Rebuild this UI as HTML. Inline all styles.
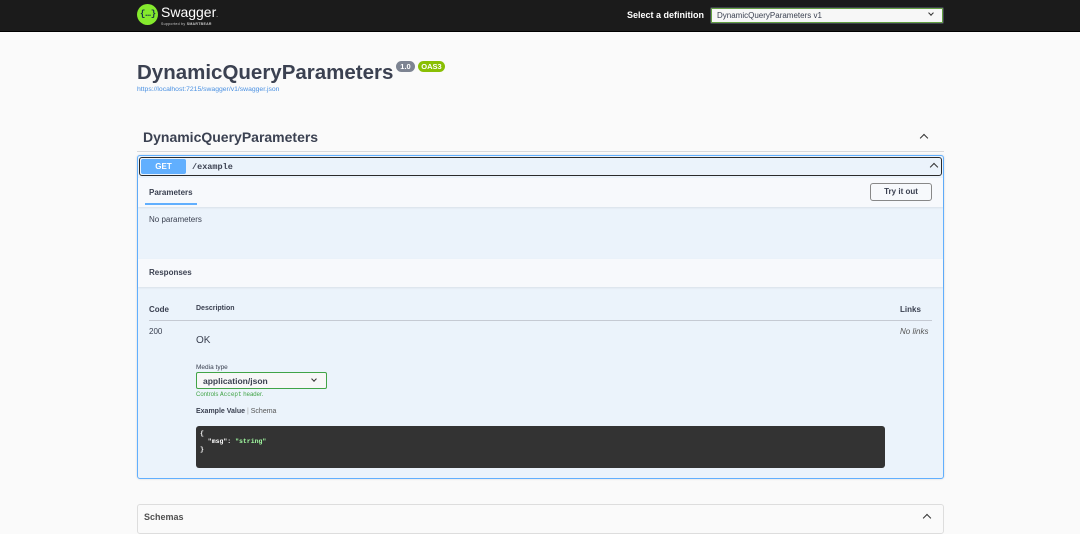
<!DOCTYPE html>
<html><head><meta charset="utf-8"><style>
*{box-sizing:border-box;margin:0;padding:0}
body{width:1080px;height:530px;overflow:hidden;background:#fafafa;font-family:"Liberation Sans",sans-serif;color:#3b4151;position:relative}
.a{position:absolute}
.top{left:0;top:0;width:1080px;height:32px;background:#1b1b1b;border-bottom:1px solid #000}
.mono{font-family:"Liberation Mono",monospace}
.chev{position:absolute;width:7px;height:7px;border-left:1.5px solid #333;border-top:1.5px solid #333;transform:rotate(45deg)}
</style></head><body>
<div class="a top">
  <div class="a" style="left:137px;top:4px;width:21px;height:21px;border-radius:50%;background:#85ea2d"></div>
  <div class="a mono" style="left:140px;top:9px;font-size:9px;color:#173647;font-weight:bold">{…}</div>
  <div class="a" style="left:161px;top:4px;font-size:14px;color:#fff">Swagger<span style="font-size:6px">.</span></div>
  <div class="a" style="left:161px;top:22px;font-size:3.5px;color:#ccc;letter-spacing:0.3px">Supported by <b>SMARTBEAR</b></div>
  <div class="a" style="left:627px;top:10px;font-size:9px;font-weight:bold;color:#fff">Select a definition</div>
  <div class="a" style="left:710px;top:7px;width:234px;height:17px;background:#f7f7f7;border:1px solid #41444e;box-shadow:0 0 0 1px #62a03f inset;border-radius:2px"></div>
  <div class="a" style="left:717px;top:11px;font-size:8px;color:#3b4151">DynamicQueryParameters v1</div>
  <div class="chev" style="left:929px;top:11px;width:4px;height:4px;transform:rotate(225deg)"></div>
</div>
<div class="a" style="left:137px;top:61px;font-size:20.5px;font-weight:bold;color:#3b4151">DynamicQueryParameters</div>
<div class="a" style="left:396px;top:61px;width:19px;height:11px;border-radius:6px;background:#7d8492;color:#fff;font-size:7.5px;font-weight:bold;text-align:center;line-height:11px">1.0</div>
<div class="a" style="left:418px;top:61px;width:27px;height:11px;border-radius:6px;background:#89bf04;color:#fff;font-size:7.5px;font-weight:bold;text-align:center;line-height:11px">OAS3</div>
<div class="a" style="left:137px;top:86px;font-size:6.8px;color:#4990e2">https://localhost:7215/swagger/v1/swagger.json</div>

<div class="a" style="left:143px;top:129px;font-size:14px;font-weight:bold;color:#3b4151">DynamicQueryParameters</div>
<div class="chev" style="left:921px;top:135px;width:6px;height:6px"></div>
<div class="a" style="left:137px;top:151px;width:807px;height:1px;background:#d8d9dc"></div>

<div class="a" style="left:137px;top:155px;width:807px;height:324px;border:1px solid #61affe;border-radius:3px;background:#ebf3fb;box-shadow:0 0 2px rgba(0,0,0,.15)"></div>
<div class="a" style="left:139px;top:157px;width:803px;height:19px;border:1.5px solid #2b2b2b;border-radius:3px"></div>
<div class="a" style="left:141px;top:159px;width:45px;height:15px;background:#61affe;border-radius:2px;color:#fff;font-size:8px;font-weight:bold;text-align:center;line-height:15px">GET</div>
<div class="a mono" style="left:192px;top:162px;font-size:8.5px;font-weight:bold;color:#3b4151">/example</div>
<div class="chev" style="left:931px;top:164px;width:6px;height:6px"></div>

<div class="a" style="left:138px;top:178px;width:805px;height:29px;background:#f7f9fc;box-shadow:0 1px 2px rgba(0,0,0,.08)"></div>
<div class="a" style="left:149px;top:188px;font-size:8px;font-weight:bold">Parameters</div>
<div class="a" style="left:145px;top:203px;width:52px;height:2px;background:#61affe"></div>
<div class="a" style="left:870px;top:183px;width:62px;height:18px;border:1.5px solid #888;border-radius:3px;font-size:8px;font-weight:bold;text-align:center;line-height:15px">Try it out</div>
<div class="a" style="left:149px;top:215px;font-size:8px">No parameters</div>

<div class="a" style="left:138px;top:259px;width:805px;height:28px;background:#f7f9fc;box-shadow:0 1px 2px rgba(0,0,0,.08)"></div>
<div class="a" style="left:149px;top:268px;font-size:8px;font-weight:bold">Responses</div>

<div class="a" style="left:149px;top:305px;font-size:8px;font-weight:bold">Code</div>
<div class="a" style="left:196px;top:305px;font-size:7px;font-weight:bold">Description</div>
<div class="a" style="left:900px;top:305px;font-size:8px;font-weight:bold">Links</div>
<div class="a" style="left:149px;top:320px;width:783px;height:1px;background:#c5cad3"></div>
<div class="a" style="left:149px;top:327px;font-size:8px">200</div>
<div class="a" style="left:900px;top:327px;font-size:8px;font-style:italic;color:#555">No links</div>
<div class="a" style="left:196px;top:335px;font-size:10px">OK</div>
<div class="a" style="left:196px;top:364px;font-size:6.5px">Media type</div>
<div class="a" style="left:196px;top:372px;width:131px;height:17px;border:1.5px solid #41a447;border-radius:2px;background:#f7f7f7"></div>
<div class="a" style="left:203px;top:376px;font-size:8.5px;font-weight:bold">application/json</div>
<div class="chev" style="left:312px;top:377px;width:4px;height:4px;transform:rotate(225deg)"></div>
<div class="a" style="left:196px;top:391px;font-size:6px;color:#41a447">Controls <span class="mono">Accept</span> header.</div>
<div class="a" style="left:196px;top:408px;font-size:7px;font-weight:bold">Example Value <span style="font-weight:normal;color:#aaa">|</span> <span style="font-weight:normal;color:#555">Schema</span></div>
<div class="a mono" style="left:196px;top:426px;width:689px;height:42px;background:#333;border-radius:3px;color:#fff;font-size:6.5px;font-weight:bold;padding:4px 4px;line-height:8px">{<br>&nbsp;&nbsp;"msg": <span style="color:#a2fca2">"string"</span><br>}</div>

<div class="a" style="left:137px;top:504px;width:807px;height:30px;border:1px solid #ddd;border-radius:3px;background:#fafafa"></div>
<div class="a" style="left:144px;top:512px;font-size:9px;font-weight:bold;color:#505050">Schemas</div>
<div class="chev" style="left:924px;top:515px;width:6px;height:6px"></div>
</body></html>
